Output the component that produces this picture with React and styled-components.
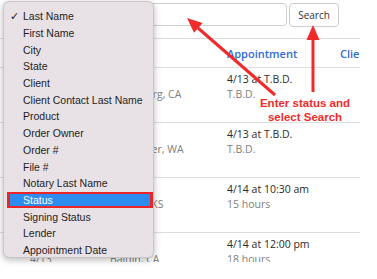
import React from 'react';
import styled, { createGlobalStyle } from 'styled-components';

const GlobalStyle = createGlobalStyle`
    html, body {
        margin: 0;
        padding: 0;
        background: #ffffff;
    }
`

const Frame = styled.div`
    position: relative;
    width: 377px;
    height: 279px;
    overflow: hidden;
    background: #ffffff;
`

const Shot = styled.div`
    width: 360px;
    height: 262px;
    overflow: hidden;
    display: flex;
    flex-direction: column;
    font-family: "Open Sans", "Liberation Sans", sans-serif;
`

const SearchBar = styled.div`
    height: 39px;
    flex-shrink: 0;
    box-sizing: border-box;
    display: flex;
    align-items: flex-start;
    gap: 2px;
    padding: 3px 21px 0 20px;
    border-bottom: 1px solid #dcdcdc;
`

const SearchInput = styled.div`
    flex: 1;
    height: 23px;
    box-sizing: border-box;
    border: 1px solid #cfcfcf;
    border-radius: 4px;
    background: #fff;
`

const SearchButton = styled.button`
    width: 50px;
    height: 24px;
    box-sizing: border-box;
    border: 1px solid #cccccc;
    border-radius: 4px;
    background: #ffffff;
    color: #333;
    font-family: "Open Sans", sans-serif;
    font-size: 10px;
    padding: 0;
`

const Row = styled.div`
    display: grid;
    grid-template-columns: 80px 117px 113px 1fr;
    padding-left: 30px;
    box-sizing: border-box;
    height: ${props => props.$header ? '29px' : '55px'};
    flex-shrink: 0;
    border-bottom: 1px solid #dedede;
    align-items: ${props => props.$header ? 'center' : 'start'};
    padding-top: ${props => props.$header ? '0' : '4px'};
`

const HeadCell = styled.div`
    color: #2f6bd8;
    font-size: 11px;
    font-weight: 600;
    white-space: nowrap;
`

const Cell = styled.div`
    display: flex;
    flex-direction: column;
    font-size: 10.5px;
    line-height: 15px;
    white-space: nowrap;
`

const Main = styled.span`
    color: #2b2b2b;
`

const Sub = styled.span`
    color: #808080;
`

const Menu = styled.ul`
    position: absolute;
    left: 3px;
    top: 1px;
    width: 151px;
    height: 257px;
    box-sizing: border-box;
    margin: 0;
    padding: 6px 0;
    list-style: none;
    background: #e8e1e5;
    border: 1px solid rgba(0, 0, 0, 0.12);
    border-radius: 6px;
    box-shadow: 0 2px 7px rgba(0, 0, 0, 0.28);
    font-family: "Liberation Sans", Arial, sans-serif;
    font-size: 10.5px;
`

const Item = styled.li`
    height: 16.7px;
    box-sizing: border-box;
    display: flex;
    align-items: center;
    margin: 0;
    padding: 0 0 0 6px;
    color: #1e1e1e;
`

const ActiveItem = styled(Item)`
    margin-left: 3px;
    padding-left: 13px;
    color: #ffffff;
    background: #2d8cf0;
    border-style: solid;
    border-color: #ec2626;
    border-width: 2px 3px;
`

const Check = styled.span`
    display: inline-block;
    width: 13px;
    flex-shrink: 0;
    font-size: 11px;
    font-weight: bold;
    font-family: "DejaVu Sans", sans-serif;
`

const Note = styled.div`
    position: absolute;
    left: 252px;
    top: 96px;
    width: 106px;
    text-align: center;
    color: #f02b2b;
    font-family: "Liberation Sans", Arial, sans-serif;
    font-weight: bold;
    font-size: 11.5px;
    line-height: 14px;
`

const Arrows = styled.svg`
    position: absolute;
    left: 0;
    top: 0;
    pointer-events: none;
`

const fields = [
    'Last Name', 'First Name', 'City', 'State', 'Client', 'Client Contact Last Name',
    'Product', 'Order Owner', 'Order #', 'File #', 'Notary Last Name', 'Status',
    'Signing Status', 'Lender', 'Appointment Date'
];

const orders = [
    { no: '1042', date: '4/12', name: 'Lee', city: 'Harrisburg, CA', when: '4/13 at T.B.D.', left: 'T.B.D.' },
    { no: '1043', date: '4/12', name: 'Ruiz', city: 'Vancouver, WA', when: '4/13 at T.B.D.', left: 'T.B.D.' },
    { no: '1044', date: '4/12', name: 'Ward', city: 'Topeka, KS', when: '4/14 at 10:30 am', left: '15 hours' },
    { no: '1045', date: '4/13', name: 'Cole', city: 'Baldin, CA', when: '4/14 at 12:00 pm', left: '18 hours' },
];

export default function App() {
    return (
        <Frame>
            <GlobalStyle />
            <Shot>
                <SearchBar>
                    <SearchInput />
                    <SearchButton>Search</SearchButton>
                </SearchBar>
                <Row $header>
                    <HeadCell>Order</HeadCell>
                    <HeadCell>Signer</HeadCell>
                    <HeadCell>Appointment</HeadCell>
                    <HeadCell>Client</HeadCell>
                </Row>
                {orders.map(o => (
                    <Row key={o.no}>
                        <Cell>
                            <Main>{o.no}</Main>
                            <Sub>{o.date}</Sub>
                        </Cell>
                        <Cell>
                            <Main>{o.name}</Main>
                            <Sub>{o.city}</Sub>
                        </Cell>
                        <Cell>
                            <Main>{o.when}</Main>
                            <Sub>{o.left}</Sub>
                        </Cell>
                        <Cell />
                    </Row>
                ))}
            </Shot>

            <Menu>
                {fields.map(f => f === 'Status' ? (
                    <ActiveItem key={f}>{f}</ActiveItem>
                ) : (
                    <Item key={f}>
                        <Check>{f === 'Last Name' ? '✓' : ''}</Check>
                        {f}
                    </Item>
                ))}
            </Menu>

            <Arrows width="377" height="279" viewBox="0 0 377 279">
                <line x1="275" y1="95" x2="198" y2="28" stroke="#f02b2b" strokeWidth="3" />
                <polygon points="187,18 202.6,23 194,32.8" fill="#f02b2b" />
                <line x1="313" y1="92" x2="313" y2="39" stroke="#f02b2b" strokeWidth="3" />
                <polygon points="313,25 319.5,40 306.5,40" fill="#f02b2b" />
            </Arrows>
            <Note>Enter status and<br />select Search</Note>
        </Frame>
    );
}
